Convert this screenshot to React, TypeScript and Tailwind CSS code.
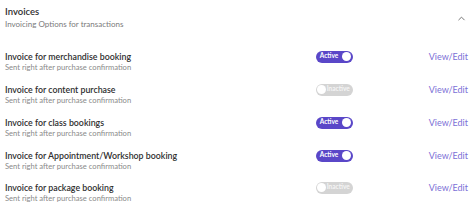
import { ChevronUp } from "lucide-react";

const ROWS = [
  { title: "Invoice for merchandise booking", active: true },
  { title: "Invoice for content purchase", active: false },
  { title: "Invoice for class bookings", active: true },
  { title: "Invoice for Appointment/Workshop booking", active: true },
  { title: "Invoice for package booking", active: false },
];

function Toggle({ active }: { active: boolean }) {
  if (active) {
    return (
      <div className="flex h-[12px] w-[37px] items-center justify-between rounded-full bg-[#5a47c8] pl-[4px] pr-[1.5px]">
        <span className="text-[6.5px] font-bold leading-none text-white">Active</span>
        <span className="size-[9px] rounded-full bg-white" />
      </div>
    );
  }
  return (
    <div className="flex h-[12px] w-[37px] items-center gap-[1px] rounded-full bg-[#d4d4d4] pl-[1.5px] pr-[3px]">
      <span className="size-[9px] rounded-full bg-white" />
      <span className="text-[6.5px] font-bold leading-none text-[#f4f4f4]">Inactive</span>
    </div>
  );
}

export default function App() {
  return (
    <main
      className="h-[203px] w-[474px] overflow-hidden bg-white"
      style={{ fontFamily: "Lato, 'Noto Sans', sans-serif" }}
    >
      {/* Header */}
      <div className="flex items-center justify-between pl-[5px] pr-[7px] pt-[6px]">
        <div>
          <p className="text-[9.5px] font-semibold leading-[12px] text-[#2e2e2e]">Invoices</p>
          <p className="mt-[1px] text-[8px] leading-[11px] text-[#7a7a7a]">Invoicing Options for transactions</p>
        </div>
        <ChevronUp size={11} strokeWidth={2} className="text-[#6b6b6b]" />
      </div>

      {/* Rows */}
      <div className="mt-[21px] flex flex-col">
        {ROWS.map((r, i) => (
          <div key={r.title} className={`flex items-start pl-[5px] pr-[6px] ${i === 3 ? "h-[32px]" : "h-[33px]"}`}>
            <div className="flex-1">
              <p className="text-[8.8px] font-semibold leading-[11px] text-[#2e2e2e]">{r.title}</p>
              <p className="text-[7.6px] leading-[11px] text-[#8a8a8a]">Sent right after purchase confirmation</p>
            </div>
            <div className="mt-[-0.5px] w-[113px]">
              <Toggle active={r.active} />
            </div>
            <a className="text-[9px] leading-[11px] text-[#7b6fd6]">View/Edit</a>
          </div>
        ))}
      </div>
    </main>
  );
}
